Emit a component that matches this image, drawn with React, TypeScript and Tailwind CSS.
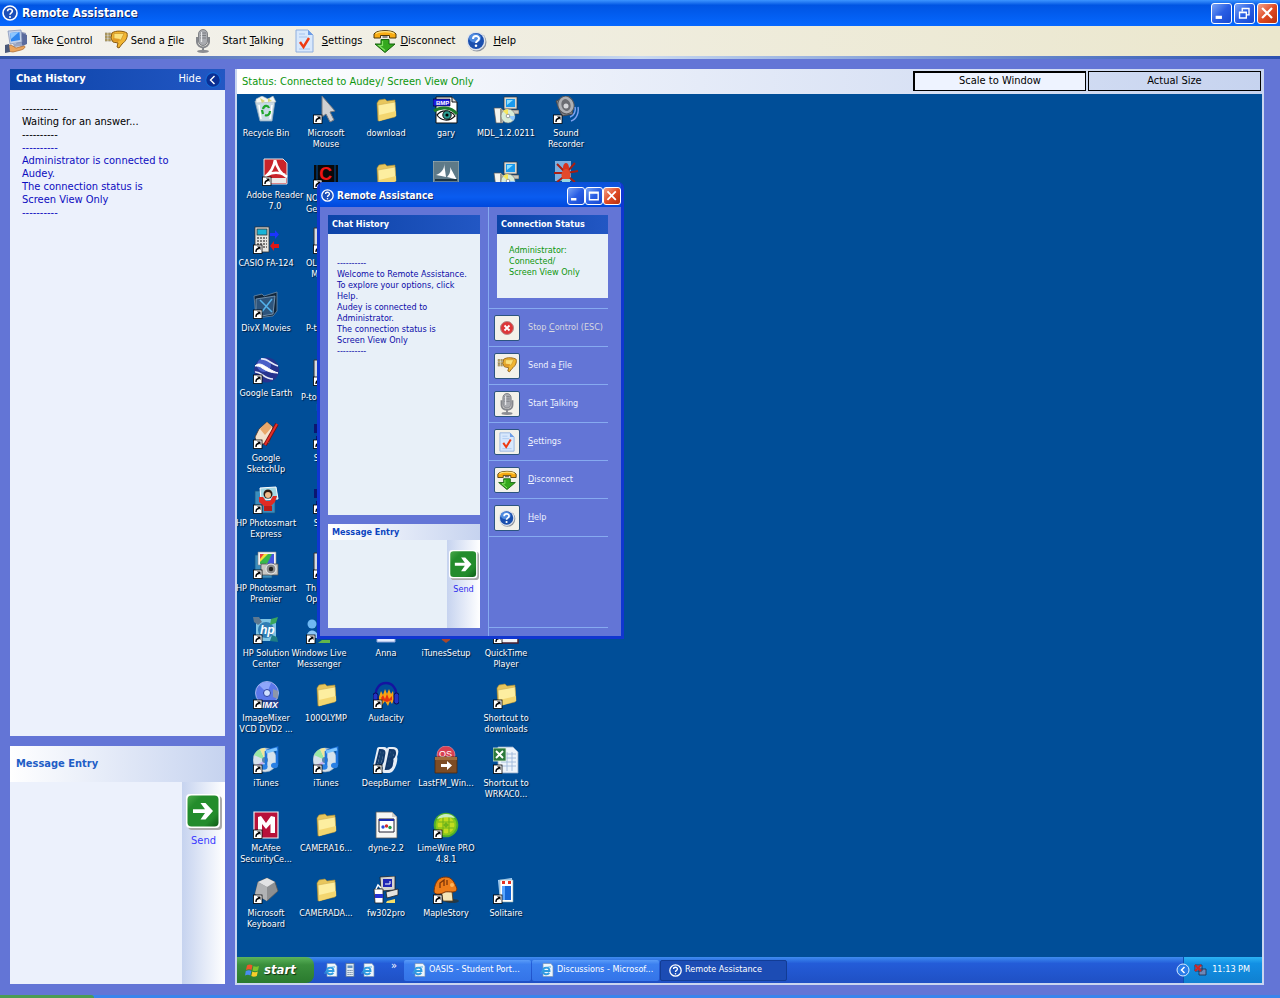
import { useId, useState } from 'react';
import type { ReactNode } from 'react';

/* ---------- shared icons ---------- */

const HelpBadge = ({ className = '' }: { className?: string }) => (
  <svg className={className} viewBox="0 0 16 16" aria-hidden="true">
    <circle cx="8" cy="8" r="7" fill="#1c4fb8" stroke="#fff" strokeWidth="1.6" />
    <path d="M5.6 6.2C5.6 3.3 10.4 3.3 10.4 6.1C10.4 7.9 8 7.8 8 9.8" fill="none" stroke="#fff" strokeWidth="1.6" />
    <circle cx="8" cy="12" r="1" fill="#fff" />
  </svg>
);

const TakeControlIcon = () => (
  <svg className="h-6 w-6" viewBox="0 0 24 24" aria-hidden="true">
    <path d="M14 2L21 4V15L16 18L11 15Z" fill="#8e98b8" />
    <path d="M17 4L22 6V15L17 17Z" fill="#5a6a9c" />
    <path d="M3 2L16 1L17 13L5 15Z" fill="#c4d2ea" stroke="#7c8cb4" strokeWidth=".7" />
    <path d="M5 4L14.500 3L15 11L6 12.500Z" fill="#2f86ee" />
    <path d="M5 4L14 3L6 10Z" fill="#8cc6ff" />
    <path d="M8 15L16 14L18 17L9 18Z" fill="#9aa6c4" />
    <path d="M1 17L6 16L11 19L19 17C21 17 20 20 16 21L8 23L1 22Z" fill="#eba55d" stroke="#a5622a" strokeWidth=".7" />
    <path d="M0 16L4 15L5 23L0 24Z" fill="#4a5878" />
  </svg>
);

const SendFileIcon = ({ className = 'h-6 w-6' }: { className?: string }) => (
  <svg className={className} viewBox="0 0 24 24" aria-hidden="true">
    <path d="M1 5H8M1 8H8M1 11H8" stroke="#6a5a34" strokeWidth="2.400" strokeDasharray="2.500 .8" />
    <path d="M1 5H8M1 8H8M1 11H8" stroke="#e4cf8a" strokeWidth="1" />
    <path d="M8 4C12 1 20 2 23 4C24 8 22 12 18 15L15 19L13 18L14 14L9 13L7 9Z" fill="#f2b632" stroke="#8a5a10" strokeWidth="1" />
    <path d="M10 4.500H20L17 11H10Z" fill="#fbe17a" stroke="#c08a20" strokeWidth=".6" />
    <path d="M9 9L16 10L14 13L9 12Z" fill="#e09a26" />
  </svg>
);

const MicIcon = ({ className = 'h-6 w-4' }: { className?: string }) => (
  <svg className={className} viewBox="0 0 16 24" aria-hidden="true">
    <path d="M2 8V13C2 16 5 18 8 18.500M14 8V13C14 16 11 18 8 18.500V22" fill="none" stroke="#85878c" strokeWidth="2" />
    <rect x="3.500" y=".5" width="9" height="16" rx="4.500" fill="#a9abb0" stroke="#6c6e74" strokeWidth=".8" />
    <path d="M5 4H11M5 6.500H11M5 9H11" stroke="#75777d" strokeWidth=".9" />
    <path d="M6.500 3V13" stroke="#e6e7ea" strokeWidth="1.300" />
    <ellipse cx="8" cy="22.300" rx="6" ry="1.600" fill="#8b8d92" />
  </svg>
);

const SettingsIcon = ({ className = 'h-6 w-[19px]' }: { className?: string }) => (
  <svg className={className} viewBox="0 0 19 24" aria-hidden="true">
    <path d="M1 1H13L18 6V23H1Z" fill="#d8e8fc" stroke="#8eaede" strokeWidth="1" />
    <path d="M13 1V6H18Z" fill="#6c9ce6" />
    <path d="M4 5H10M4 8H12M4 20H15" stroke="#a6c4ee" />
    <path d="M5 13L8.500 18L14 9" fill="none" stroke="#ee3a12" strokeWidth="2.400" />
  </svg>
);

const DisconnectIcon = ({ className = 'h-6 w-6' }: { className?: string }) => (
  <svg className={className} viewBox="0 0 24 24" aria-hidden="true">
    <path d="M1 9V5C3 .5 21 .5 23 5V9H16.500V6.500H7.500V9Z" fill="#f8ab12" stroke="#4c3608" strokeWidth="1" />
    <path d="M3 4.500C6 2 18 2 21 4.500" stroke="#ffe27e" strokeWidth="1.400" fill="none" />
    <path d="M9.500 8H14.500" stroke="#6a6a6a" strokeWidth="1.500" />
    <path d="M8 10.500H16V15H22L12 23.500L2 15H8Z" fill="#35a81e" stroke="#15600c" strokeWidth="1" />
    <path d="M9.500 12V16.500H6L12 21.500" stroke="#83e064" strokeWidth="1.200" fill="none" />
  </svg>
);

const HelpIcon = ({ className = 'h-6 w-[21px]' }: { className?: string }) => (
  <svg className={className} viewBox="0 0 21 24" aria-hidden="true">
    <circle cx="11" cy="13" r="9.500" fill="#8d949f" />
    <circle cx="10" cy="12" r="9.500" fill="#dfe4ec" />
    <circle cx="10" cy="12" r="8" fill="#1a4fae" />
    <ellipse cx="9" cy="9" rx="6" ry="4.500" fill="#4f8be0" />
    <path d="M7 10C7 6.200 13 6.200 13 9.600C13 12 10 11.800 10 14" fill="none" stroke="#fff" strokeWidth="2" />
    <circle cx="10" cy="16.800" r="1.300" fill="#fff" />
  </svg>
);

const StopIcon = () => (
  <svg className="h-5 w-5" viewBox="0 0 20 20" aria-hidden="true">
    <circle cx="10" cy="10" r="6.500" fill="#dd3638" stroke="#b58a88" strokeWidth="1" />
    <path d="M7.500 7.500L12.500 12.500M12.500 7.500L7.500 12.500" stroke="#fff" strokeWidth="1.800" />
  </svg>
);

const SendArrow = ({ className = '' }: { className?: string }) => {
  const id = useId();
  return (
    <svg className={className} viewBox="0 0 36 36" aria-hidden="true">
      <defs>
        <linearGradient id={id} x1="0" y1="0" x2="1" y2="1">
          <stop offset="0" stopColor="#4aa84a" />
          <stop offset=".25" stopColor="#238c2c" />
          <stop offset=".75" stopColor="#238c2c" />
          <stop offset="1" stopColor="#0e5c16" />
        </linearGradient>
      </defs>
      <rect x="2" y="2" width="34" height="34" rx="4" fill="#a9a9a9" />
      <rect x="0" y="0" width="34" height="34" rx="4" fill="#fff" />
      <rect x="1.500" y="1.500" width="31" height="31" rx="4" fill={`url(#${id})`} />
      <path d="M7 15.200H19L14.500 9H19.500L27 17L19.500 25.500H14.500L19 19H7Z" fill="#fff" />
    </svg>
  );
};

const IeIcon = () => (
  <svg className="h-[14px] w-[14px] shrink-0" viewBox="0 0 14 14" aria-hidden="true">
    <path d="M3 .5H11L13 3V13.500H3Z" fill="#eef6fc" stroke="#7892b4" strokeWidth=".7" />
    <path d="M3 8H9.500C9.500 3.500 3 3.500 3 8C3 12 8 12 9.200 9.800" fill="none" stroke="#2f9be0" strokeWidth="1.900" />
    <path d="M1 11C0 8 7 3 11 4" fill="none" stroke="#3aa4e6" strokeWidth=".9" />
  </svg>
);

/* ---------- desktop icons, all on a 26x28 grid ---------- */

const Folder = () => (
  <>
    <path d="M4 7L6 4L12 3L14 5L22 4V21L5 25Z" fill="#e8c65c" stroke="#a88a30" strokeWidth=".6" />
    <path d="M5 9L22 6L23 20L6 25Z" fill="#fdeea0" stroke="#cfae50" strokeWidth=".6" />
    <path d="M6 19L23 15V20L6 25Z" fill="#f3d670" />
  </>
);

const Installer = () => (
  <>
    <path d="M11 1H24V13H11Z" fill="#d8d8d4" stroke="#333" strokeWidth=".7" />
    <path d="M13 3H22V11H13Z" fill="#1899ee" />
    <path d="M14 4L20 4L14 9Z" fill="#8fe0ff" />
    <path d="M8 14H26V18H8Z" fill="#c8c6be" stroke="#444" strokeWidth=".6" />
    <path d="M1 12H8L10 14V27H3Z" fill="#f4f4ee" stroke="#555" strokeWidth=".7" />
    <path d="M8 13V27" stroke="#9c9a90" strokeWidth="2" />
    <circle cx="15" cy="20" r="7" fill="#d8ecd8" stroke="#777" strokeWidth=".6" />
    <path d="M15 20L10 15A7 7 0 0 1 15 13Z" fill="#f6e65c" />
    <path d="M15 20L20 25A7 7 0 0 0 22 20Z" fill="#8fc9ff" />
    <circle cx="15" cy="20" r="1.800" fill="#fff" stroke="#666" strokeWidth=".6" />
  </>
);

const ITunes = () => (
  <>
    <circle cx="12" cy="14" r="12" fill="#d6e2ec" stroke="#8da0b4" strokeWidth=".6" />
    <path d="M12 14L1 9A12 12 0 0 1 7 3Z" fill="#9ae8a4" />
    <path d="M12 14L7 3A12 12 0 0 1 12 2Z" fill="#f2e69a" />
    <path d="M12 14L2 20A12 12 0 0 0 8 25Z" fill="#c4b2f0" />
    <circle cx="12" cy="14" r="3" fill="#5b86ac" />
    <path d="M13 5L24 2V19M13 5V21" fill="none" stroke="#1f74dc" strokeWidth="2.600" />
    <path d="M13 6L24 3" stroke="#7cc4ff" strokeWidth="3" />
    <ellipse cx="11" cy="21" rx="3.500" ry="2.800" fill="#2a80e4" />
    <ellipse cx="21.500" cy="19.500" rx="3.500" ry="2.800" fill="#2a80e4" />
  </>
);

const RecycleBin = () => (
  <>
    <path d="M2 5L22 5L19 25L7 25Z" fill="#c9dbe6" stroke="#8fa8ba" strokeWidth=".8" />
    <path d="M3 3L9 0L15 3L20 0L23 6L3 7Z" fill="#f3f6f2" stroke="#a7b6c0" strokeWidth=".6" />
    <path d="M7 2L12 5L9 7ZM15 2L19 5L15 6Z" fill="#d9d478" />
    <path d="M6 9L8 23M19 9L17 23" stroke="#fff" strokeWidth="1.500" />
    <path d="M10 13C11 9 15 9 16 12M17 15C17 19 14 20 12 19M10 18L9 14" fill="none" stroke="#1fa62a" strokeWidth="2.200" />
  </>
);

const Mouse = () => <path d="M9 0L22 15L17 16L21 24L17 26L13 18L9 21Z" fill="#cfd0d2" stroke="#77797e" strokeWidth="1" />;

const Eye = () => (
  <>
    <path d="M3 1H19L24 6V27H3Z" fill="#fff" stroke="#111" strokeWidth="1" />
    <path d="M19 1V6H24" fill="#ddd" stroke="#111" />
    <path d="M0 3H17V10H0Z" fill="#1a1ae0" stroke="#000" strokeWidth=".6" />
    <text x="3" y="9" fontSize="6" fontWeight="700" fill="#fff" fontFamily="Liberation Sans, sans-serif">BMP</text>
    <path d="M1 15C7 11 17 10 24 18" fill="none" stroke="#1d7a2c" strokeWidth="3" />
    <path d="M4 19C9 13 18 14 22 20C16 26 8 25 4 19Z" fill="#fff" stroke="#111" strokeWidth="1.200" />
    <circle cx="14" cy="19" r="4.200" fill="#2b9a8f" stroke="#111" />
    <circle cx="14" cy="19" r="1.600" fill="#000" />
  </>
);

const Speaker = () => (
  <>
    <path d="M3 5L15 0L20 18L9 20Z" fill="#83858a" stroke="#46484d" />
    <ellipse cx="13" cy="9" rx="8" ry="9" fill="#aeb0b4" stroke="#55575c" transform="rotate(-18 13 9)" />
    <ellipse cx="13" cy="9" rx="4.500" ry="6" fill="#6b6d72" transform="rotate(-18 13 9)" />
    <circle cx="13" cy="10" r="2.500" fill="#d5d7da" />
    <path d="M17 21C21 20 23 15 22 11M18 25C24 23 26 16 25 11" fill="none" stroke="#7da2f0" strokeWidth="1.400" />
  </>
);

const Adobe = () => (
  <>
    <path d="M2 1H21L25 5V26H2Z" fill="#c9242a" stroke="#e8e8e8" strokeWidth="1" />
    <path d="M3 20H24V25H3Z" fill="#e9e9e9" />
    <path d="M13 2C12 9 8 15 3 19M13 2C15 10 19 16 25 19M5 17C11 14 17 14 23 17" fill="none" stroke="#fff" strokeWidth="2.600" />
  </>
);

const Casio = () => (
  <>
    <rect x="2" y="1" width="14" height="25" fill="#e6e6e2" stroke="#333" strokeWidth=".8" />
    <rect x="4" y="3" width="10" height="6" fill="#18b4d8" stroke="#333" strokeWidth=".8" />
    <path d="M4 12H14M4 15H14M4 18H14M4 21H14" stroke="#555" strokeWidth="1.500" strokeDasharray="2 1" />
    <path d="M17 7H22V4L26 8.500L22 13V10H17Z" fill="#1c34ff" />
    <path d="M26 18H21V15L17 20L21 25V22H26Z" fill="#e01818" />
  </>
);

const Divx = () => (
  <>
    <path d="M1 5L9 3L11 5L24 1V20L20 25L3 27Z" fill="#10263c" stroke="#6e8aa4" strokeWidth=".8" />
    <path d="M3 8L22 5L20 23L3 26Z" fill="#2d547c" stroke="#85a2bc" strokeWidth=".8" />
    <path d="M7 9L19 21M19 8L8 22" stroke="#54b2ec" strokeWidth="1.500" />
  </>
);

const Earth = () => (
  <>
    <circle cx="13.500" cy="14" r="12.500" fill="#26338e" />
    <circle cx="11" cy="9" r="7" fill="#4a60c8" />
    <path d="M2 10C8 4 13 13 25 17C17 17 12 14 9 12C7 10 4 10 2 10Z" fill="#fff" stroke="#fff" />
    <path d="M8 3C14 2 18 8 25 10M2 16C8 15 11 23 20 23" fill="none" stroke="#e6eaf8" strokeWidth="1.600" />
  </>
);

const SketchUp = () => (
  <>
    <path d="M6 8L14 1L20 6L16 22L4 24L2 16Z" fill="#f3e2cc" stroke="#4a3022" strokeWidth=".8" />
    <path d="M7 8L14 1L19 6L12 14Z" fill="#e9a86a" />
    <path d="M24 3L12 24" stroke="#781010" strokeWidth="3.600" />
    <path d="M24 3L12 24" stroke="#e4302a" strokeWidth="2" />
  </>
);

const PhotosmartExpress = () => (
  <>
    <path d="M2 5H22V27H2Z" fill="#3b8dbd" stroke="#17577f" strokeWidth=".7" />
    <path d="M7 2L23 1L25 13L8 14Z" fill="#a5d8e4" stroke="#fff" strokeWidth="1" />
    <path d="M6 11H10L13 15H17L20 10H24L22 16L18 20H11L6 16Z" fill="#e02b24" />
    <circle cx="15" cy="8" r="4.500" fill="#2c1a12" />
    <circle cx="15" cy="9" r="3" fill="#f0bb8c" />
    <path d="M11 20H19V25H11Z" fill="#b91c18" />
  </>
);

const PhotosmartPremier = () => (
  <>
    <path d="M2 4H19V27H2Z" fill="#3b8dbd" stroke="#17577f" strokeWidth=".7" />
    <path d="M5 1H23V14H5Z" fill="#f4f4f4" stroke="#888" strokeWidth=".6" />
    <path d="M7 3H21L7 12Z" fill="#e84040" />
    <path d="M11 3H21V6L9 13H7V8Z" fill="#f2e03a" />
    <path d="M15 3H21V9L13 13H7V11Z" fill="#38b84c" />
    <path d="M19 3H21V13H14Z" fill="#4455dd" />
    <path d="M8 13H25V24H8Z" fill="#c9c9c5" stroke="#555" strokeWidth=".8" />
    <circle cx="18" cy="18" r="5" fill="#8b8b8b" stroke="#eee" />
    <circle cx="18" cy="18" r="2.200" fill="#222" />
  </>
);

const HpSolution = () => (
  <>
    <path d="M3 3H23V25H3Z" fill="#7fc4e4" />
    <circle cx="13" cy="14" r="8" fill="#2f7db4" />
    <path d="M0 1H6L9 6L5 9L1 6Z" fill="#5d7890" />
    <path d="M25 1L18 3L17 9L23 7Z" fill="#3aa65c" />
    <path d="M25 26L17 25L19 19L24 21Z" fill="#1d7d84" />
    <text x="7" y="18" fontSize="12" fontStyle="italic" fontWeight="700" fill="#fff" fontFamily="Liberation Sans, sans-serif">hp</text>
  </>
);

const ImageMixer = () => (
  <>
    <circle cx="14" cy="12" r="11.500" fill="#5b78ea" stroke="#b9c4f4" strokeWidth=".8" />
    <path d="M14 12L6 4A11 11 0 0 1 18 2Z" fill="#8ea6fa" />
    <circle cx="14" cy="12" r="3.500" fill="#cfe0ff" stroke="#2a3fa0" />
    <path d="M20 8L25 10V18L20 16Z" fill="#8d97aa" />
    <path d="M9 19H26V27H9Z" fill="#24408c" />
    <text x="9" y="27" fontSize="9" fontStyle="italic" fontWeight="700" fill="#fff" fontFamily="Liberation Sans, sans-serif">IMX</text>
  </>
);

const Audacity = () => (
  <>
    <path d="M3 17C0 -3 26 -3 23 17" fill="none" stroke="#1414a0" strokeWidth="2.400" />
    <path d="M6 16L8 10L10 14L12 8L14 13L16 8L18 13L20 10L21 18L19 23L17 20L15 25L12 20L9 24L6 20Z" fill="#f8a414" />
    <path d="M8 17L10 14L12 18L14 13L16 18L19 15V19L14 21L9 19Z" fill="#e63312" />
    <rect x="0" y="12" width="5" height="11" rx="2.400" fill="#2332c4" stroke="#0a0a50" />
    <rect x="21" y="12" width="5" height="11" rx="2.400" fill="#2332c4" stroke="#0a0a50" />
  </>
);

const DeepBurner = () => (
  <>
    <path d="M6 3H11C13 3 13 6 12 10L10 18C9 20 7 21 2 21ZM16 3H20C24 3 24 6 22 11C23 13 21 24 16 25L11 25Z" fill="#17406e" stroke="#e8eef6" strokeWidth="4" strokeLinejoin="round" />
    <path d="M7 4L3 20C8 20 9 18 10 15L11 9C12 5 11 4 7 4ZM17 4L13 23C18 23 19 20 19 17C20 14 19 13 16 13C21 13 22 9 22 7C22 4 20 4 17 4Z" fill="none" stroke="#12386a" strokeWidth="2.200" />
  </>
);

const LastFm = () => (
  <>
    <circle cx="13" cy="9" r="9" fill="#d83f52" stroke="#f0a0a8" strokeWidth=".6" />
    <text x="6" y="11" fontSize="9" fill="#fff" fontFamily="Liberation Sans, sans-serif">OS</text>
    <path d="M2 11H24V27H2Z" fill="#7d4c24" stroke="#4c2a10" strokeWidth=".8" />
    <path d="M2 11H24V14H2Z" fill="#a06c3c" />
    <path d="M8 18H14V15L19 19.500L14 24V21H8Z" fill="#fff" />
  </>
);

const Excel = () => (
  <>
    <path d="M5 1H20L25 6V27H5Z" fill="#eef4fb" stroke="#8aa4c4" strokeWidth=".8" />
    <path d="M13 8H23M13 12H23M8 16H23M8 20H23M14 6V25M19 6V25" stroke="#9eb8da" strokeWidth=".9" />
    <path d="M0 2H13V15H0Z" fill="#2c7a3c" stroke="#dff0df" strokeWidth=".8" />
    <path d="M3 5L10 12M10 5L3 12" stroke="#fff" strokeWidth="1.900" />
  </>
);

const McAfee = () => (
  <>
    <path d="M1 1H25V27H1Z" fill="#b8113a" stroke="#f0f0f0" strokeWidth="1.200" />
    <path d="M5 22V6L8 5L13 12L18 5L22 6V22H17.500V13L13 18L9 13V22Z" fill="#fff" />
  </>
);

const Dyne = () => (
  <>
    <path d="M3 1H19L24 6V27H3Z" fill="#f7f7f4" stroke="#555" strokeWidth=".8" />
    <path d="M19 1V6H24Z" fill="#cfcfcb" />
    <path d="M6 8H21V21H6Z" fill="#fff" stroke="#223" strokeWidth="1" />
    <path d="M6 8H21V10H6Z" fill="#1a2ab0" />
    <circle cx="10" cy="16" r="1.700" fill="#2a49d8" />
    <circle cx="13.500" cy="15" r="1.700" fill="#d82a2a" />
    <circle cx="17" cy="16.500" r="1.700" fill="#229944" />
  </>
);

const Lime = () => (
  <>
    <circle cx="13" cy="14" r="12.300" fill="#4cae2c" />
    <circle cx="13" cy="14" r="10.500" fill="#86c81c" />
    <circle cx="13" cy="14" r="8.500" fill="#c2dc1e" />
    <path d="M10 6V22M16 6V22M5 11H21M5 17H21" stroke="#6fb41a" strokeWidth="1.100" />
    <path d="M13 11L16 14L13 17L10 14Z" fill="#6fb41a" />
    <path d="M4 8C7 2 18 1 22 7C16 6 10 6 4 8Z" fill="#c9ecc0" />
  </>
);

const Keyboard = () => (
  <>
    <path d="M5 6L14 2L22 6L25 15L14 25L2 18Z" fill="#8e9092" stroke="#56585a" strokeWidth=".8" />
    <path d="M5 6L14 2L22 6L14 11Z" fill="#e2e3e4" />
    <path d="M5 6L14 11V25L2 18Z" fill="#b1b3b5" />
  </>
);

const Fw302 = () => (
  <>
    <path d="M7 1L22 0V14L8 15Z" fill="#d4d4d0" stroke="#222" strokeWidth=".8" />
    <path d="M10 3H19V11H10Z" fill="#1d24b4" />
    <path d="M12 8H17V5" stroke="#fff" fill="none" />
    <path d="M13 16L25 13V19L14 22Z" fill="#e4e4e0" stroke="#222" strokeWidth=".8" />
    <path d="M1 13H10V27H2Z" fill="#fff" stroke="#222" strokeWidth=".8" />
    <path d="M2 18H10V22H2Z" fill="#2733d4" />
    <path d="M3 13L5 9L8 12" stroke="#fff" strokeWidth="1.500" fill="none" />
    <path d="M14 25L22 23V27H13Z" fill="#f6de66" />
  </>
);

const Maple = () => (
  <>
    <ellipse cx="19" cy="25" rx="7" ry="2" fill="#223a4a" />
    <path d="M8 15H19L20 25H10Z" fill="#f5e6b8" stroke="#5c3a12" strokeWidth=".8" />
    <path d="M1 15C2 5 6 1 13 1C19 1 22 7 24 13C23 18 17 15 12 16C7 19 1 19 1 15Z" fill="#ee7d1a" stroke="#7c3408" strokeWidth="1" />
    <path d="M7 12V7L11 4V10M14 4V9" fill="none" stroke="#7c3408" strokeWidth="1.300" />
    <circle cx="19" cy="9" r="2" fill="#ffb45a" />
  </>
);

const Solitaire = () => (
  <>
    <path d="M5 4L19 2V25L7 26Z" fill="#a8d2fa" />
    <path d="M7 4H20V26H7Z" fill="#fff" stroke="#8aa" strokeWidth=".6" />
    <path d="M9 10H18V24H9Z" fill="#1467d6" />
    <path d="M9 10H12V24H9Z" fill="#59a6ff" />
    <path d="M9 5H12V8H9ZM15 5H18V8H15Z" fill="#e63322" />
  </>
);

const Nomad = () => (
  <>
    <path d="M1 4H25V26H1Z" fill="#0a0a0a" />
    <path d="M4 4V26M22 4V26" stroke="#004e98" strokeWidth="1" />
    <text x="6" y="19" fontSize="18" fontWeight="700" fill="#f01414" fontFamily="Liberation Sans, sans-serif">C</text>
  </>
);

const Sails = () => (
  <>
    <path d="M0 0H26V28H0Z" fill="#5e7a88" stroke="#c5d2d6" strokeWidth=".7" />
    <path d="M11 2C12 8 8 12 3 14C7 15 10 15 13 16ZM17 6C18 11 16 14 14 16C17 17 20 17 24 19Z" fill="#fff" />
    <path d="M2 18H24V20H2Z" fill="#1d3440" />
  </>
);

const Spider = () => (
  <>
    <path d="M2 0H18V20H2Z" fill="#7caede" />
    <path d="M13 12L4 3M13 12L22 2M13 12L1 12M13 12L25 10M13 14L4 21M13 14L22 21" stroke="#a81e12" strokeWidth="2" />
    <ellipse cx="13" cy="7" rx="3" ry="5" fill="#d8321c" />
    <ellipse cx="13" cy="14" rx="4.500" ry="6" fill="#e24a2a" />
    <path d="M9 18H17V28H9Z" fill="#9ad8e0" />
  </>
);

const Messenger = () => (
  <>
    <circle cx="6" cy="8" r="4.500" fill="#6fb8f2" />
    <path d="M0 22C1 12 11 12 13 22Z" fill="#8cc8f8" />
    <path d="M16 24H24V27H12Z" fill="#63b84a" />
  </>
);

const Device = () => (
  <>
    <path d="M1 2H22V26H1Z" fill="#d6dbe0" stroke="#333" strokeWidth="1" />
    <path d="M5 6H19V14H5Z" fill="#24507a" />
  </>
);

const DarkApp = () => <path d="M1 3H25V12H1ZM3 15H23V26H3Z" fill="#0b1670" />;

const Page = () => <path d="M4 1H22V26H4Z" fill="#e4ecff" stroke="#8ea4d8" />;

const Setup = () => <path d="M5 8H21L17 24L13 27L9 24Z" fill="#a8482c" />;

const QuickTime = () => <path d="M3 2H25V27H3Z" fill="#f4f4f8" stroke="#4a2030" strokeWidth="1.500" />;

const ShortcutArrow = () => (
  <>
    <rect x=".5" y="19" width="8.500" height="8.500" fill="#fff" stroke="#000" strokeWidth=".8" />
    <path d="M3 26C3 23 4.500 22.500 6 22.500" fill="none" stroke="#000" strokeWidth="1.400" />
    <path d="M4 20.500H7.500V24Z" fill="#000" />
  </>
);

// "cut" labels run in under the session window, so they line up on the left
type DesktopItem = { x: number; y: number; label?: string; art?: ReactNode; shortcut?: boolean; cut?: boolean };

const COL = 60;
const ROW = 65;
const at = (col: number, row: number) => ({ x: col * COL - 1, y: row * ROW + 2 });

const desktopItems: DesktopItem[] = [
  { ...at(0, 0), label: 'Recycle Bin', art: <RecycleBin /> },
  { ...at(1, 0), label: 'Microsoft\nMouse', art: <Mouse />, shortcut: true },
  { ...at(2, 0), label: 'download', art: <Folder /> },
  { ...at(3, 0), label: 'gary', art: <Eye /> },
  { ...at(4, 0), label: 'MDL_1.2.0211', art: <Installer /> },
  { ...at(5, 0), label: 'Sound\nRecorder', art: <Speaker />, shortcut: true },
  { x: 8, y: 64, label: 'Adobe Reader\n7.0', art: <Adobe />, shortcut: true },
  { ...at(1, 1), label: 'NO\nGe', art: <Nomad />, shortcut: true, cut: true },
  { ...at(2, 1), art: <Folder /> },
  { ...at(3, 1), art: <Sails /> },
  { ...at(4, 1), art: <Installer /> },
  { ...at(5, 1), art: <Spider /> },
  { ...at(0, 2), label: 'CASIO FA-124', art: <Casio />, shortcut: true },
  { ...at(1, 2), label: 'OL\n  M', art: <Device />, shortcut: true, cut: true },
  { ...at(0, 3), label: 'DivX Movies', art: <Divx />, shortcut: true },
  { ...at(1, 3), label: 'P-t', cut: true },
  { ...at(0, 4), label: 'Google Earth', art: <Earth />, shortcut: true },
  { x: 59, y: 264, art: <Device />, shortcut: true },
  { x: 54, y: 266, label: 'P-to\n      I', cut: true },
  { ...at(0, 5), label: 'Google\nSketchUp', art: <SketchUp />, shortcut: true },
  { ...at(1, 5), label: '   S', art: <DarkApp />, shortcut: true, cut: true },
  { ...at(0, 6), label: 'HP Photosmart\nExpress', art: <PhotosmartExpress />, shortcut: true },
  { ...at(1, 6), label: '   S', art: <DarkApp />, shortcut: true, cut: true },
  { ...at(0, 7), label: 'HP Photosmart\nPremier', art: <PhotosmartPremier />, shortcut: true },
  { ...at(1, 7), label: 'Th\nOp', art: <Device />, shortcut: true, cut: true },
  { ...at(0, 8), label: 'HP Solution\nCenter', art: <HpSolution />, shortcut: true },
  { x: 52, y: 522, label: 'Windows Live\nMessenger', art: <Messenger />, shortcut: true },
  { ...at(2, 8), label: 'Anna', art: <Page /> },
  { ...at(3, 8), label: 'iTunesSetup', art: <Setup /> },
  { ...at(4, 8), label: 'QuickTime\nPlayer', art: <QuickTime />, shortcut: true },
  { ...at(0, 9), label: 'ImageMixer\nVCD DVD2 ...', art: <ImageMixer />, shortcut: true },
  { ...at(1, 9), label: '100OLYMP', art: <Folder /> },
  { ...at(2, 9), label: 'Audacity', art: <Audacity />, shortcut: true },
  { ...at(4, 9), label: 'Shortcut to\ndownloads', art: <Folder />, shortcut: true },
  { ...at(0, 10), label: 'iTunes', art: <ITunes />, shortcut: true },
  { ...at(1, 10), label: 'iTunes', art: <ITunes />, shortcut: true },
  { ...at(2, 10), label: 'DeepBurner', art: <DeepBurner />, shortcut: true },
  { ...at(3, 10), label: 'LastFM_Win...', art: <LastFm /> },
  { ...at(4, 10), label: 'Shortcut to\nWRKAC0...', art: <Excel />, shortcut: true },
  { ...at(0, 11), label: 'McAfee\nSecurityCe...', art: <McAfee />, shortcut: true },
  { ...at(1, 11), label: 'CAMERA16...', art: <Folder /> },
  { ...at(2, 11), label: 'dyne-2.2', art: <Dyne /> },
  { ...at(3, 11), label: 'LimeWire PRO\n4.8.1', art: <Lime />, shortcut: true },
  { ...at(0, 12), label: 'Microsoft\nKeyboard', art: <Keyboard />, shortcut: true },
  { ...at(1, 12), label: 'CAMERADA...', art: <Folder /> },
  { ...at(2, 12), label: 'fw302pro', art: <Fw302 /> },
  { ...at(3, 12), label: 'MapleStory', art: <Maple />, shortcut: true },
  { ...at(4, 12), label: 'Solitaire', art: <Solitaire />, shortcut: true },
];

const DesktopIcon = ({ x, y, label, art, shortcut, cut }: DesktopItem) => (
  <button type="button" className="absolute flex w-[60px] flex-col items-center gap-1" style={{ left: x, top: y }}>
    <svg className="h-7 w-[26px] shrink-0" viewBox="0 0 26 28" aria-hidden="true">
      {art}
      {shortcut && <ShortcutArrow />}
    </svg>
    {label && (
      <span className={`text-[9px] leading-[11px] whitespace-pre text-white [text-shadow:1px_1px_1px_#001838] ${cut ? 'self-start pl-[10px] text-left' : 'text-center'}`}>
        {label}
      </span>
    )}
  </button>
);

/* ---------- window chrome ---------- */

const glyphs = {
  Minimize: <path d="M4 13H11V16.500H4Z" fill="#fff" />,
  Restore: <path d="M8 8V5H15.500V12H13M5 9H12.500V15.500H5ZM5 9.500H12.500" fill="none" stroke="#fff" strokeWidth="1.500" />,
  Maximize: <path d="M4.500 5.500H16V15.500H4.500ZM4.500 6.500H16" fill="none" stroke="#fff" strokeWidth="1.800" />,
  Close: <path d="M4.500 4.500L15.500 15.500M15.500 4.500L4.500 15.500" stroke="#fff" strokeWidth="2.400" />,
};

const WindowButton = ({ kind, small }: { kind: keyof typeof glyphs; small?: boolean }) => (
  <button
    type="button"
    aria-label={kind}
    className={`rounded-[3px] border border-white ${small ? 'size-[18px]' : 'size-[21px]'} ${
      kind === 'Close'
        ? 'bg-linear-to-br from-[#f0a088] via-[#e04a22] to-[#b8300c]'
        : 'bg-linear-to-br from-[#7ba2f4] via-[#2a5ee4] to-[#1748d0]'
    }`}
  >
    <svg viewBox="0 0 21 21" className="size-full" aria-hidden="true">{glyphs[kind]}</svg>
  </button>
);

const tools = [
  { before: 'Take ', key: 'C', after: 'ontrol', icon: <TakeControlIcon /> },
  { before: 'Send a ', key: 'F', after: 'ile', icon: <SendFileIcon /> },
  { before: 'Start ', key: 'T', after: 'alking', icon: <MicIcon /> },
  { before: '', key: 'S', after: 'ettings', icon: <SettingsIcon /> },
  { before: '', key: 'D', after: 'isconnect', icon: <DisconnectIcon /> },
  { before: '', key: 'H', after: 'elp', icon: <HelpIcon /> },
];

const sessionActions = [
  { before: 'Stop ', key: 'C', after: 'ontrol (ESC)', icon: <StopIcon />, disabled: true },
  { before: 'Send a ', key: 'F', after: 'ile', icon: <SendFileIcon className="h-5 w-5" /> },
  { before: 'Start ', key: 'T', after: 'alking', icon: <MicIcon className="h-[22px] w-4" /> },
  { before: '', key: 'S', after: 'ettings', icon: <SettingsIcon className="h-5 w-4" /> },
  { before: '', key: 'D', after: 'isconnect', icon: <DisconnectIcon className="h-[22px] w-5" /> },
  { before: '', key: 'H', after: 'elp', icon: <HelpIcon className="h-5 w-[18px]" /> },
];

/* ---------- the session window on the remote desktop ---------- */

const SessionWindow = () => (
  <section className="absolute top-[88px] left-[80px] flex h-[457px] w-[307px] flex-col overflow-hidden rounded-t-md border-[3px] border-t-0 border-[#1036d0] bg-[#6375d6] text-[9px]">
    <header className="flex h-[25px] shrink-0 items-center bg-linear-to-b from-[#0a50d8] via-[#0a5cf0] via-60% to-[#0048dc] pt-[2px] pl-px text-white">
      <HelpBadge className="mr-[3px] size-[13px]" />
      <h2 className="text-[10px] font-bold [text-shadow:1px_1px_0_#0a246a]">Remote Assistance</h2>
      <div className="ml-auto flex">
        <WindowButton kind="Minimize" small />
        <WindowButton kind="Maximize" small />
        <WindowButton kind="Close" small />
      </div>
    </header>

    <div className="flex min-h-0 flex-1">
      <div className="flex w-[168px] flex-col gap-[9px] p-2">
        <div className="flex min-h-0 flex-1 flex-col">
          <h3 className="h-[19px] bg-linear-to-r from-[#0c44a8] to-[#2257c4] pl-1 text-[9px] leading-[19px] font-bold text-white">Chat History</h3>
          <div className="flex-1 bg-[#e8f0f8] px-[9px] pt-6 leading-[11px] whitespace-pre-line text-[#0c0ca8]">
            {'----------\nWelcome to Remote Assistance.\nTo explore your options, click\nHelp.\nAudey is connected to\nAdministrator.\nThe connection status is\nScreen View Only\n----------'}
          </div>
        </div>
        <div className="flex h-[104px] flex-col">
          <label htmlFor="remote-message" className="h-4 bg-linear-to-r from-white to-[#c6d3ef] pl-1 text-[9px] leading-4 font-bold text-[#0c44c0]">Message Entry</label>
          <div className="flex min-h-0 flex-1">
            <textarea id="remote-message" className="min-w-0 flex-1 resize-none bg-[#e8f0f8] p-1 outline-none" />
            <div className="flex w-[33px] flex-col items-center bg-linear-to-r from-[#c6d3ef] to-white pt-[10px]">
              <button type="button" className="flex flex-col items-center gap-1 text-[#2a2aee]">
                <SendArrow className="size-[30px]" />
                <span className="leading-[11px]">Send</span>
              </button>
            </div>
          </div>
        </div>
      </div>

      <div className="flex min-w-0 flex-1 flex-col border-l border-[#86aaf0] pt-2 pr-[13px] pb-2">
        <div className="mb-[10px] ml-2 flex h-[83px] flex-col">
          <h3 className="h-[19px] bg-linear-to-r from-[#0c44a8] to-[#2257c4] pl-1 text-[9px] leading-[19px] font-bold text-white">Connection Status</h3>
          <p className="flex-1 bg-[#e8f0f8] pt-[11px] pl-3 leading-[11px] whitespace-pre-line text-[#0c960c]">
            {'Administrator:\nConnected/\nScreen View Only'}
          </p>
        </div>
        {sessionActions.map((a) => (
          <button
            key={a.after}
            type="button"
            disabled={a.disabled}
            className="flex h-[38px] shrink-0 items-center border-t border-[#86aaf0] pl-[5px] text-[#eef2ff] disabled:text-[#d8d8e0]"
          >
            <span className="mr-2 flex size-[26px] items-center justify-center rounded-[2px] border border-[#2c5480] bg-[#f2f1ea]">{a.icon}</span>
            <span>{a.before}<u>{a.key}</u>{a.after}</span>
          </button>
        ))}
        <div className="flex-1 border-y border-[#86aaf0]" />
      </div>
    </div>
  </section>
);

const WindowsFlag = () => (
  <svg className="size-[15px]" viewBox="0 0 15 15" aria-hidden="true">
    <path d="M2 2.500C4 1 6 1.500 7.500 2.500L6.500 7C5 6 3 6 1 7Z" fill="#f0562a" />
    <path d="M8.500 3C10 4 12 4 14 3L13 7.500C11 8.500 9 8.500 7.500 7.500Z" fill="#7cc62c" />
    <path d="M.8 8C3 7 5 7 6.300 8L5.300 12.500C4 11.500 2 11.500 0 12.500Z" fill="#4a8cf0" />
    <path d="M7.300 8.500C9 9.500 11 9.500 12.800 8.500L11.800 13C10 14 8 14 6.300 13Z" fill="#f8cc2a" />
  </svg>
);

const taskButton = 'flex h-[21px] w-[127px] items-center gap-[3px] rounded-[2px] px-2 bg-linear-to-b from-[#5a9cf8] via-[#3c80f0] via-20% to-[#3474e8]';

const Taskbar = () => (
  <footer className="flex h-[26px] items-center bg-linear-to-b from-[#3f8cf0] via-[#245cd8] via-25% to-[#1f50c4] text-[9px] text-white">
    <button type="button" className="flex h-full w-[77px] items-center gap-1 rounded-r-lg bg-linear-to-b from-[#5cb45c] via-[#3a8f3c] via-30% to-[#2a7a2e] pl-2">
      <WindowsFlag />
      <span className="text-[13px] leading-4 font-bold italic [text-shadow:1px_1px_1px_#103010]">start</span>
    </button>
    <div className="ml-[10px] flex items-center gap-[5px]">
      <IeIcon />
      <svg className="h-[14px] w-[13px]" viewBox="0 0 13 14" aria-hidden="true">
        <rect x="3" y=".5" width="8" height="13" fill="#dfeaf4" stroke="#5d7898" strokeWidth=".8" />
        <path d="M4.500 2.500H9.500V5H4.500Z" fill="#5c90c4" />
        <path d="M4.500 7.500H9.500M4.500 9.500H9.500M4.500 11.500H9.500" stroke="#5d7898" strokeDasharray="1.200 .8" />
      </svg>
      <IeIcon />
    </div>
    <span className="ml-4 pb-2 text-[11px] leading-4">»</span>
    <div className="ml-[7px] flex gap-px">
      <button type="button" className={taskButton}><IeIcon /><span className="whitespace-nowrap">OASIS - Student Port...</span></button>
      <button type="button" className={taskButton}><IeIcon /><span className="whitespace-nowrap">Discussions - Microsof...</span></button>
      <button type="button" className="flex h-[21px] w-[127px] items-center gap-[3px] rounded-[2px] border border-[#123c94] bg-[#1c4cb4] px-2">
        <HelpBadge className="size-[13px]" />
        <span className="whitespace-nowrap">Remote Assistance</span>
      </button>
    </div>
    <div className="ml-auto flex h-full items-center gap-1 border-l border-[#0c50b0] bg-linear-to-b from-[#2cb4f4] via-[#1290e4] via-25% to-[#1080d0] pr-3">
      <svg className="-ml-2 size-[14px]" viewBox="0 0 14 14" aria-hidden="true">
        <circle cx="7" cy="7" r="6" fill="#2a7ce8" stroke="#d8ecff" />
        <path d="M8.500 4L5.500 7L8.500 10" fill="none" stroke="#fff" strokeWidth="1.500" />
      </svg>
      <svg className="size-[14px]" viewBox="0 0 14 14" aria-hidden="true">
        <path d="M1 2H8V8H1ZM5 6H12V12H5Z" fill="#6c88b8" stroke="#1c2c4c" strokeWidth=".8" />
        <path d="M1 2L7 8M7 2L1 8" stroke="#d02424" strokeWidth="1.800" />
      </svg>
      <time>11:13 PM</time>
    </div>
  </footer>
);

/* ---------- main window ---------- */

const viewModes = ['Scale to Window', 'Actual Size'];

const App = () => {
  const [mode, setMode] = useState(viewModes[0]);

  return (
    <div className="flex min-h-screen flex-col bg-[#6375d6] font-['DejaVu_Sans_Condensed','DejaVu_Sans',sans-serif] text-[11px] text-black">
      <header className="flex h-[26px] items-center bg-linear-to-b from-[#3c94ff] via-[#0054e3] via-20% to-[#0668ff] pr-[2px] pl-[2px] text-white">
        <HelpBadge className="mr-1 size-4" />
        <h1 className="text-[12px] font-bold [text-shadow:1px_1px_0_#0a246a]">Remote Assistance</h1>
        <div className="ml-auto flex gap-[2px]">
          <WindowButton kind="Minimize" />
          <WindowButton kind="Restore" />
          <WindowButton kind="Close" />
        </div>
      </header>

      <nav className="flex h-[30px] items-center gap-[11px] bg-linear-to-r from-[#f3f2ee] to-[#ebe7cd] pl-[5px]">
        {tools.map((t) => (
          <button key={t.after} type="button" className="flex items-center">
            <span className="flex w-[27px]">{t.icon}</span>
            <span className="whitespace-nowrap">{t.before}<u>{t.key}</u>{t.after}</span>
          </button>
        ))}
      </nav>
      <div className="h-[3px] bg-linear-to-r from-[#3454a8] via-[#c8d8f0] to-[#2c50b0]" />

      <div className="flex flex-1 gap-[10px] pt-[10px] pr-4 pb-[10px] pl-[10px]">
        <aside className="flex w-[215px] shrink-0 flex-col gap-[10px] pb-px">
          <section className="flex flex-1 flex-col bg-[#ecf1fc]">
            <div className="flex h-[21px] items-center bg-linear-to-r from-[#0c44a8] to-[#2257c4] pr-1 pl-[6px] text-white">
              <h2 className="font-bold">Chat History</h2>
              <button type="button" className="ml-auto flex items-center gap-1">
                Hide
                <svg className="size-4" viewBox="0 0 16 16" aria-hidden="true">
                  <circle cx="8" cy="8" r="7.300" fill="#0a2f94" stroke="#1468d4" strokeWidth="1.200" />
                  <path d="M9.500 4L5.500 8L9.500 12" fill="none" stroke="#fff" strokeWidth="1.400" />
                </svg>
              </button>
            </div>
            <div className="p-3 leading-[13px]">
              <p className="whitespace-pre-line">{'----------\nWaiting for an answer...\n----------'}</p>
              <p className="whitespace-pre-line text-[#0c0cc0]">
                {'----------\nAdministrator is connected to\nAudey.\nThe connection status is\nScreen View Only\n----------'}
              </p>
            </div>
          </section>

          <section className="flex h-[238px] flex-col">
            <label htmlFor="message" className="h-9 bg-linear-to-r from-white to-[#c6d3ef] pl-[6px] leading-9 font-bold text-[#215dc6]">Message Entry</label>
            <div className="flex min-h-0 flex-1">
              <textarea id="message" className="min-w-0 flex-1 resize-none bg-[#ecf1fc] p-2 outline-none" />
              <div className="flex w-[43px] flex-col items-center bg-linear-to-r from-[#c6d3ef] to-white pt-3">
                <button type="button" className="flex flex-col items-center gap-1 text-[#3a3aff]">
                  <SendArrow className="size-9" />
                  <span className="leading-[13px]">Send</span>
                </button>
              </div>
            </div>
          </section>
        </aside>

        <main className="flex min-w-0 flex-1 flex-col border-2 border-t-0 border-[#c9d5f0]">
          <div className="flex h-[25px] items-start gap-[2px] bg-linear-to-r from-white to-[#c6d3ef] pt-[2px]">
            <p className="pl-[5px] leading-[21px] text-[#0c960c]">Status: Connected to Audey/ Screen View Only</p>
            <div className="ml-auto flex gap-[2px] pr-px">
              {viewModes.map((m) => (
                <button
                  key={m}
                  type="button"
                  aria-pressed={m === mode}
                  onClick={() => setMode(m)}
                  className={`h-5 w-[173px] border border-black ${m === mode ? 'border-t-2 border-l-2 bg-[#eef3ff]' : ''}`}
                >
                  {m}
                </button>
              ))}
            </div>
          </div>

          <div className="relative min-h-[850px] flex-1 overflow-hidden bg-[#004e98]">
            {desktopItems.map((item) => (
              <DesktopIcon key={`${item.x}-${item.y}`} {...item} />
            ))}
            <SessionWindow />
          </div>
          <Taskbar />
        </main>
      </div>

      <div className="flex h-[3px] bg-[#3a84ec]">
        <div className="w-[94px] rounded-tr bg-[#4c9c54]" />
      </div>
    </div>
  );
};

export default App;
